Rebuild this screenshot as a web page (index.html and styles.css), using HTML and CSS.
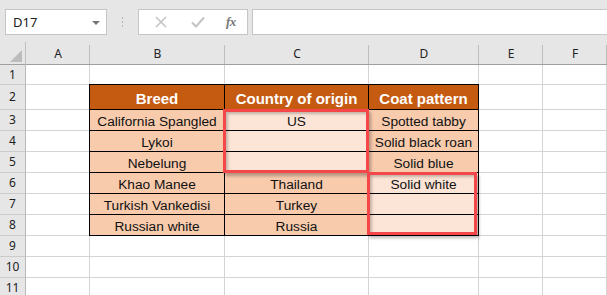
FILE: index.html
```html
<!DOCTYPE html>
<html>
<head>
<meta charset="utf-8">
<link rel="stylesheet" href="styles.css">
</head>
<body>
<div class="app">
  <div class="toolbar">
    <div class="namebox"><span class="ref">D17</span><span class="caret"></span></div>
    <div class="grip"><i></i><i></i><i></i></div>
    <div class="fbtns">
      <svg class="ico x" width="12" height="12" viewBox="0 0 12 12"><path d="M1 1L11 11M11 1L1 11" stroke="#c4c4c4" stroke-width="1.6" fill="none"/></svg>
      <svg class="ico ok" width="14" height="12" viewBox="0 0 14 12"><path d="M1 6.5L5 10.5L13 1.5" stroke="#c4c4c4" stroke-width="2" fill="none"/></svg>
      <span class="fx">fx</span>
    </div>
    <div class="finput"></div>
  </div>
  <div class="sheet">
    <div class="corner"></div><div class="ch">A</div><div class="ch">B</div><div class="ch">C</div><div class="ch">D</div><div class="ch">E</div><div class="ch">F</div>

    <div class="rh">1</div><div class="c"></div><div class="c"></div><div class="c"></div><div class="c"></div><div class="c"></div><div class="c"></div>

    <div class="rh">2</div><div class="c"></div><div class="c t th">Breed</div><div class="c t th">Country of origin</div><div class="c t th">Coat pattern</div><div class="c"></div><div class="c"></div>

    <div class="rh">3</div><div class="c"></div><div class="c t td">California Spangled</div><div class="c t hl">US</div><div class="c t td">Spotted tabby</div><div class="c"></div><div class="c"></div>

    <div class="rh">4</div><div class="c"></div><div class="c t td">Lykoi</div><div class="c t hl"></div><div class="c t td">Solid black roan</div><div class="c"></div><div class="c"></div>

    <div class="rh">5</div><div class="c"></div><div class="c t td">Nebelung</div><div class="c t hl"></div><div class="c t td">Solid blue</div><div class="c"></div><div class="c"></div>

    <div class="rh">6</div><div class="c"></div><div class="c t td">Khao Manee</div><div class="c t td">Thailand</div><div class="c t hl">Solid white</div><div class="c"></div><div class="c"></div>

    <div class="rh">7</div><div class="c"></div><div class="c t td">Turkish Vankedisi</div><div class="c t td">Turkey</div><div class="c t hl"></div><div class="c"></div><div class="c"></div>

    <div class="rh">8</div><div class="c"></div><div class="c t td">Russian white</div><div class="c t td">Russia</div><div class="c t hl"></div><div class="c"></div><div class="c"></div>

    <div class="rh">9</div><div class="c"></div><div class="c"></div><div class="c"></div><div class="c"></div><div class="c"></div><div class="c"></div>

    <div class="rh">10</div><div class="c"></div><div class="c"></div><div class="c"></div><div class="c"></div><div class="c"></div><div class="c"></div>

    <div class="rh">11</div><div class="c"></div><div class="c"></div><div class="c"></div><div class="c"></div><div class="c"></div><div class="c"></div>

    <div class="mark mark-c"></div>
    <div class="mark mark-d"></div>
  </div>
</div>
</body>
</html>
```

FILE: styles.css
```css
* { box-sizing: border-box; }
html, body { margin: 0; padding: 0; }
body {
  width: 607px;
  height: 295px;
  overflow: hidden;
  background: #e6e6e6;
  font-family: "Liberation Sans", Arial, sans-serif;
}
.app { width: 607px; }

.toolbar {
  height: 42px;
  display: flex;
  align-items: flex-start;
  padding: 9px 0 0 5px;
}
.namebox {
  width: 102px;
  height: 26px;
  background: #fff;
  border: 1px solid #c6c6c6;
  display: flex;
  align-items: center;
  justify-content: space-between;
  padding: 0 6px 0 7px;
  font-family: "Noto Sans", "DejaVu Sans", sans-serif;
  font-size: 13px;
  color: #222;
}
.caret {
  width: 0; height: 0;
  border-left: 4px solid transparent;
  border-right: 4px solid transparent;
  border-top: 4px solid #777;
  margin-top: 1px;
}
.grip {
  width: 31px;
  height: 26px;
  display: flex;
  flex-direction: column;
  align-items: center;
  justify-content: center;
  gap: 2px;
}
.grip i {
  display: block;
  width: 1px; height: 2px;
  background: #b8b8b8;
}
.fbtns {
  width: 110px;
  height: 26px;
  background: #fff;
  border: 1px solid #c6c6c6;
  display: flex;
  align-items: center;
  padding-left: 16px;
}
.ico.x { margin-right: 24px; }
.ico.ok { margin-right: 21px; }
.fx {
  font-family: "Liberation Serif", "DejaVu Serif", serif;
  font-style: italic;
  font-weight: bold;
  font-size: 13px;
  color: #777;
  letter-spacing: -0.5px;
}
.finput {
  flex: 1;
  height: 26px;
  margin-left: 4px;
  margin-right: -2px;
  background: #fff;
  border: 1px solid #c6c6c6;
}

.sheet {
  position: relative;
  display: grid;
  grid-template-columns: 26px 64px 135px 144px 110px 64px 64px;
  grid-template-rows: 23px 20px 25px repeat(9, 21px);
  background: #fff;
}
.corner {
  position: relative;
  background: #e6e6e6;
  border-right: 1px solid #c0c0c0;
  border-bottom: 1px solid #9f9f9f;
}
.corner::before {
  content: "";
  position: absolute;
  right: 3px;
  bottom: 2px;
  width: 12px;
  height: 12px;
  background: #bcbcbc;
  clip-path: polygon(100% 0, 100% 100%, 0 100%);
}
.ch {
  position: relative;
  background: #e6e6e6;
  border-bottom: 1px solid #9f9f9f;
  display: flex;
  align-items: flex-end;
  justify-content: center;
  padding-bottom: 2px;
  font-family: "Noto Sans", "DejaVu Sans", sans-serif;
  font-size: 12px;
  color: #222;
}
.ch::after {
  content: "";
  position: absolute;
  right: 0;
  top: 3px;
  bottom: 0;
  width: 1px;
  background: #bdbdbd;
}
.rh {
  background: #e6e6e6;
  border-right: 1px solid #b8b8b8;
  border-bottom: 1px solid #cbcbcb;
  display: flex;
  align-items: center;
  justify-content: center;
  font-family: "Noto Sans", "DejaVu Sans", sans-serif;
  font-size: 12px;
  line-height: 14px;
  color: #222;
}
.c {
  border-right: 1px solid #d4d4d4;
  border-bottom: 1px solid #d4d4d4;
}
.t {
  border-right-color: #000;
  border-bottom-color: #000;
  box-shadow: -1px 0 0 #000, 0 -1px 0 #000, -1px -1px 0 #000;
  display: flex;
  align-items: flex-end;
  justify-content: center;
  padding-bottom: 1px;
  font-size: 13.7px;
  color: #111;
  white-space: nowrap;
}
.th {
  background: #c55a11;
  color: #fff;
  font-weight: bold;
  font-size: 15px;
  padding-bottom: 2px;
}
.td { background: #f8cbad; }
.hl { background: #fce4d6; }

.mark {
  position: absolute;
  border: 3px solid #f5464a;
  box-shadow: inset 2px 2px 3px rgba(0, 0, 0, 0.22), 2px 3px 3px rgba(0, 0, 0, 0.28);
}
.mark-c {
  left: 223px;
  top: 67px;
  width: 146px;
  height: 64px;
}
.mark-d {
  left: 367px;
  top: 130px;
  width: 110px;
  height: 63px;
}
```
